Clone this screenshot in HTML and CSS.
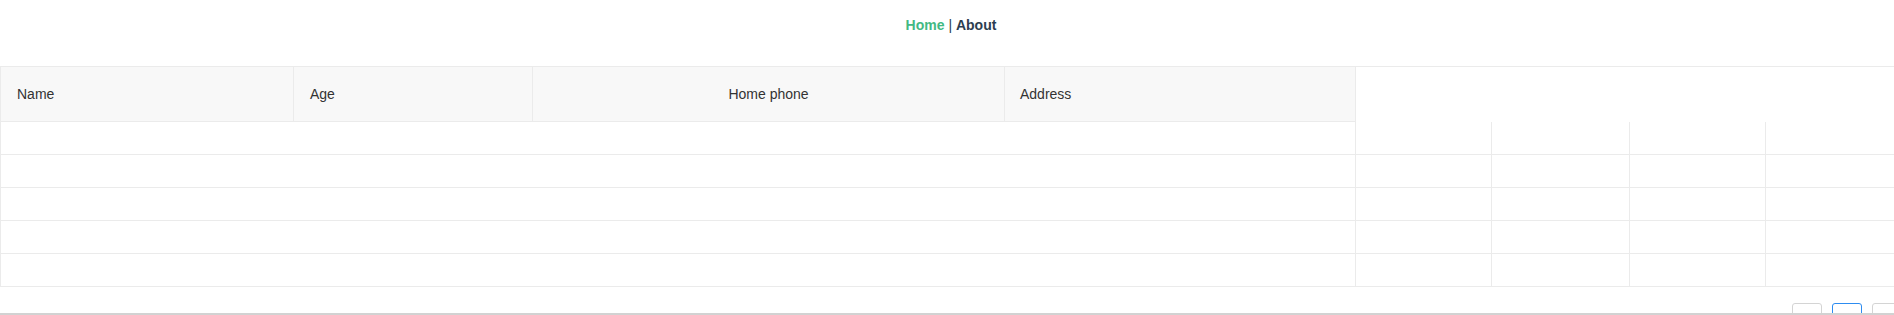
FILE: index.html
```html
<!DOCTYPE html>
<html lang="en">
<head>
  <meta charset="UTF-8">
  <meta name="viewport" content="width=device-width, initial-scale=1.0">
  <title>Table</title>
  <link rel="stylesheet" href="styles.css">
</head>
<body>
  <div id="app">
    <div id="nav">
      <a href="#" class="active">Home</a> | <a href="#">About</a>
    </div>

    <div class="table-wrap">
      <!-- main table -->
      <div class="table-main">
        <div class="thead">
          <div class="th">Name</div>
          <div class="th">Age</div>
          <div class="th center">Home phone</div>
          <div class="th">Address</div>
        </div>
        <div class="tbody">
          <div class="tr"></div>
          <div class="tr"></div>
          <div class="tr"></div>
          <div class="tr"></div>
          <div class="tr"></div>
        </div>
      </div>

      <!-- fixed right columns -->
      <div class="table-side">
        <div class="side-head"></div>
        <div class="side-body">
          <div class="td"></div><div class="td"></div><div class="td"></div><div class="td"></div>
          <div class="td"></div><div class="td"></div><div class="td"></div><div class="td"></div>
          <div class="td"></div><div class="td"></div><div class="td"></div><div class="td"></div>
          <div class="td"></div><div class="td"></div><div class="td"></div><div class="td"></div>
          <div class="td"></div><div class="td"></div><div class="td"></div><div class="td"></div>
        </div>
      </div>
    </div>

    <div class="pager">
      <span class="page"></span>
      <span class="page current"></span>
      <span class="page"></span>
    </div>
    <div class="bottom-line"></div>
  </div>
</body>
</html>
```

FILE: styles.css
```css
html, body {
  margin: 0;
  padding: 0;
  background: #fff;
  overflow: hidden;
}
#app {
  font-family: "Liberation Sans", Arial, sans-serif;
  color: #333;
  font-size: 14px;
}
#nav {
  box-sizing: border-box;
  height: 66px;
  padding: 17px 0 0 8px;
  line-height: 16px;
  text-align: center;
  color: #2c3e50;
}
#nav a {
  font-weight: bold;
  color: #2c3e50;
  text-decoration: none;
}
#nav a.active {
  color: #42b983;
}
.table-wrap {
  display: flex;
  border-top: 1px solid #ebebeb;
  width: calc(100% + 20px);
}
.table-main {
  flex: none;
}
.thead {
  display: grid;
  grid-template-columns: 293px 239px 472px 352px;
  background: #f8f8f8;
}
.th {
  box-sizing: border-box;
  height: 55px;
  line-height: 54px;
  padding-left: 16px;
  border-left: 1px solid #ebebeb;
  border-bottom: 1px solid #ebebeb;
}
.th:last-child {
  border-right: 1px solid #ebebeb;
  padding-left: 15px;
}
.th.center {
  padding-left: 0;
  text-align: center;
}
.tr {
  box-sizing: border-box;
  height: 33px;
  border-left: 1px solid #ebebeb;
  border-right: 1px solid #ebebeb;
  border-bottom: 1px solid #ebebeb;
}
.table-side {
  flex: none;
}
.side-head {
  height: 55px;
}
.side-body {
  display: grid;
  grid-template-columns: 136px 138px 136px 137px;
}
.td {
  box-sizing: border-box;
  height: 33px;
  border-right: 1px solid #ebebeb;
  border-bottom: 1px solid #ebebeb;
}
.pager {
  display: flex;
  justify-content: flex-end;
  gap: 10px;
  height: 10px;
  margin-top: 16px;
  margin-right: -8px;
  overflow: hidden;
}
.page {
  box-sizing: border-box;
  width: 30px;
  height: 24px;
  border: 1px solid #d4d4d4;
  border-radius: 3px;
  background: #fff;
}
.page.current {
  border-color: #2d8cf0;
}
.bottom-line {
  border-top: 2px solid #d2d2d2;
}
```
